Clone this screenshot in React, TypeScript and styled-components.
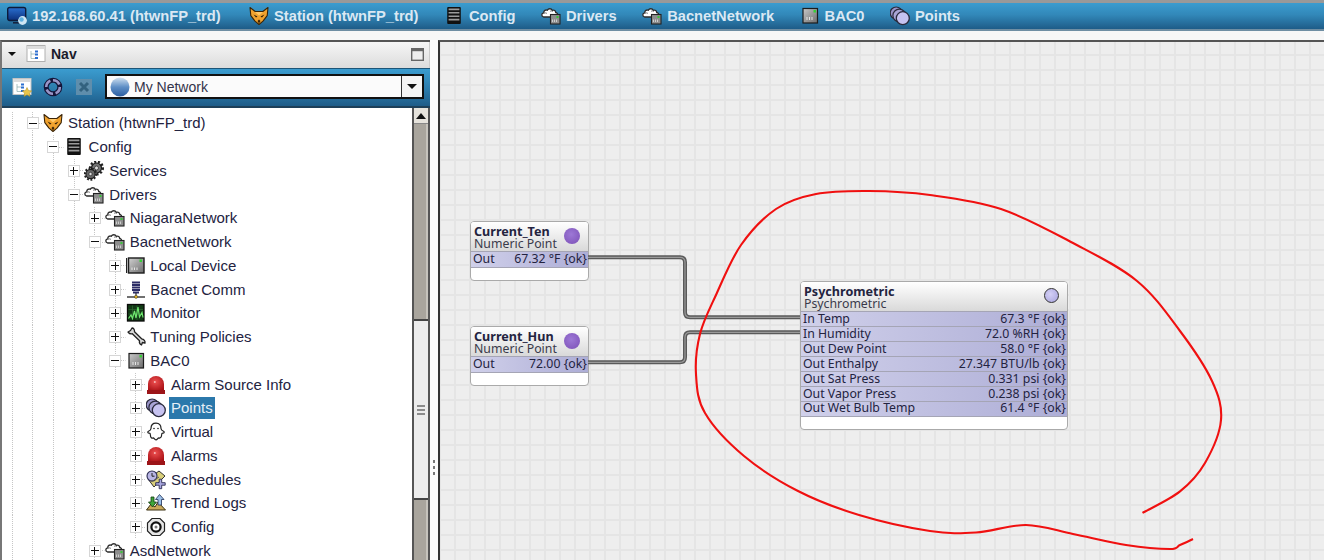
import React from "react";
import styled, { createGlobalStyle } from "styled-components";

const Global = createGlobalStyle`
  html, body { margin: 0; padding: 0; background: #f7f7f7; }
  * { box-sizing: border-box; }
`;

/* ---------- icons ---------- */
const Svg: React.FC<{ size?: number; children: React.ReactNode }> = ({ size = 20, children }) => (
  <svg width={size} height={size} viewBox="0 0 20 20" style={{ display: "block", flex: "none" }}>{children}</svg>
);
const MonitorIcon = () => (
  <Svg>
    <defs><linearGradient id="mon" x1="0" y1="0" x2="0" y2="1"><stop offset="0" stopColor="#2a6fd0"/><stop offset="1" stopColor="#0b2f7a"/></linearGradient></defs>
    <rect x="0.7" y="1.5" width="18" height="13" rx="2" fill="url(#mon)" stroke="#0d1b3a" strokeWidth="1.4"/>
    <path d="M6 16h8v1.6H6z" fill="#15233f"/>
    <circle cx="15.5" cy="14.5" r="4.4" fill="#cfe6f4"/>
    <circle cx="14.5" cy="13.5" r="2.2" fill="#5fb0e0"/>
  </Svg>
);
const FoxIcon = () => (
  <Svg>
    <path d="M1 1.5 6.2 5.5h7.6L19 1.5l-.8 8.2-4.2 5.5L10 18.5 6 15.2 1.8 9.7z" fill="#f0a22e" stroke="#3a2408" strokeWidth="1.1" strokeLinejoin="round"/>
    <path d="M4.5 8.5 8.5 10.5 7 11.5zM15.5 8.5 11.5 10.5 13 11.5z" fill="#2a1a06"/>
    <path d="M8.5 15 10 17.6 11.5 15 10 13.5z" fill="#3a2408"/>
    <path d="M6 6 10 9.5 14 6z" fill="#ffc766"/>
  </Svg>
);
const ServerIcon = () => (
  <Svg>
    <rect x="3.2" y="1" width="13.6" height="17" rx="1" fill="#111"/>
    <path d="M4.6 3.4h10.8M4.6 6.8h10.8M4.6 10.2h10.8M4.6 13.6h10.8" stroke="#9a9a9a" strokeWidth="1.6"/>
  </Svg>
);
const CloudIcon = () => (
  <Svg>
    <path d="M2.500 11C.2 10.300.2 7.200 2.800 6.800 2.500 4.600 4.800 3.400 6.300 4.300 7.300 2.200 10.300 2.200 11.200 4.300c1.800-.8 3.600.4 3.500 2.200 1.500.2 2.300 1.500 2 3L15 11z" fill="#fff" stroke="#2b2b2b" strokeWidth="1.300" strokeLinejoin="round"/>
    <path d="M3 7.500c1-1 2-.6 3 0M9 5.500c1-1 2.200-.6 3 .3" fill="none" stroke="#555" strokeWidth=".8"/>
    <rect x="9.500" y="8.500" width="9.500" height="9.500" fill="#8e8e8e" stroke="#222" strokeWidth="1.100"/>
    <rect x="15.500" y="10" width="2" height="2" fill="#39c539"/>
    <path d="M11.500 16v-2.500M13.500 16v-2.500M15.500 16v-2.500" stroke="#ddd" strokeWidth=".8"/>
  </Svg>
);
const DeviceIcon = () => (
  <Svg>
    <defs><linearGradient id="dev" x1="0" y1="0" x2="1" y2="1"><stop offset="0" stopColor="#c9c9c9"/><stop offset="1" stopColor="#6c6c6c"/></linearGradient></defs>
    <rect x="3" y="2.500" width="14.500" height="14.500" fill="url(#dev)" stroke="#1c1c1c" strokeWidth="1.200"/>
    <rect x="13.500" y="4" width="2.500" height="2.500" fill="#35d035"/>
    <path d="M7 14v-3M9.500 14v-3M12 14v-3" stroke="#eee" strokeWidth=".9"/>
  </Svg>
);
const WideDeviceIcon = () => (
  <Svg>
    <defs><linearGradient id="wdev" x1="0" y1="0" x2="1" y2="1"><stop offset="0" stopColor="#d2d2d2"/><stop offset="1" stopColor="#6c6c6c"/></linearGradient></defs>
    <path d="M.6 2v15" stroke="#222" strokeWidth="1.200"/>
    <rect x="2.500" y="2" width="15.500" height="15" fill="url(#wdev)" stroke="#1c1c1c" strokeWidth="1.400"/>
    <rect x="13.500" y="3.500" width="2.500" height="2.500" fill="#35d035"/>
    <path d="M6 14v-2.500M8.500 14v-2.500M11 14v-2.500" stroke="#eee" strokeWidth=".9"/>
  </Svg>
);
const PointsIcon = () => (
  <Svg>
    <circle cx="6.200" cy="7" r="6" fill="#9a94c8" stroke="#2a2a3c" strokeWidth="1.200"/>
    <circle cx="9.300" cy="9.500" r="6.400" fill="#a9a4d6" stroke="#2a2a3c" strokeWidth="1.200"/>
    <circle cx="12.800" cy="12.200" r="6.500" fill="#c6c2f0" stroke="#2a2a3c" strokeWidth="1.300"/>
  </Svg>
);
const GearsIcon = () => (
  <Svg>
    <circle cx="12.500" cy="7" r="5" fill="#777" stroke="#1b1b1b" strokeWidth="1.200"/>
    <circle cx="12.500" cy="7" r="6.300" fill="none" stroke="#222" strokeWidth="2.400" strokeDasharray="2 1.800"/>
    <circle cx="12.500" cy="7" r="2" fill="#ddd" stroke="#222" strokeWidth=".7"/>
    <circle cx="6.500" cy="13" r="4.600" fill="#666" stroke="#1b1b1b" strokeWidth="1.100"/>
    <circle cx="6.500" cy="13" r="5.600" fill="none" stroke="#222" strokeWidth="2.200" strokeDasharray="1.800 1.600"/>
    <circle cx="6.500" cy="13" r="1.700" fill="#ddd" stroke="#222" strokeWidth=".7"/>
  </Svg>
);
const CommIcon = () => (
  <Svg>
    <path d="M6 2.500h8M6 5h8M6 7.500h8M6 10h8M7 12.500h6" stroke="#2c2c66" strokeWidth="1.800"/>
    <path d="M10 13v3" stroke="#333" strokeWidth="1.200"/>
    <path d="M1 17h18" stroke="#222" strokeWidth="1.300"/>
    <circle cx="10" cy="16.800" r="1.600" fill="#e0b020" stroke="#333" strokeWidth=".5"/>
  </Svg>
);
const ChartIcon = () => (
  <Svg>
    <rect x="1.500" y="1.500" width="16.500" height="16.500" fill="#123a16" stroke="#0a0a0a" strokeWidth="1.300"/>
    <path d="M2.500 6.500h14.500M2.500 11h14.500M6.500 2.500v14.500M11 2.500v14.500" stroke="#2f6a33" strokeWidth=".7"/>
    <path d="M2.500 15.500 5 12l1.500 3.500L8.500 8 10 15l2-11 1.500 10L16 9.500l1 5" fill="none" stroke="#6fe86f" strokeWidth="1.200"/>
  </Svg>
);
const WrenchIcon = () => (
  <Svg>
    <path d="M2 5c1.400 1.800 3 2.200 4.300 1.700l7.200 7c-.4 1.700.2 3.500 2 4.300l.9-2.500 2.600.6c.4-2.100-1-4-3.400-4.300L8.500 4.700C8.700 2.600 7.600 1 6 1L4.500 3.500z" fill="#d9d9d9" stroke="#222" strokeWidth="1.300" strokeLinejoin="round"/>
  </Svg>
);
const AlarmIcon = () => (
  <Svg>
    <defs><radialGradient id="alm" cx=".45" cy=".4" r=".7"><stop offset="0" stopColor="#ee5050"/><stop offset="1" stopColor="#a80f14"/></radialGradient></defs>
    <path d="M2 15.500V9a8 8 0 0 1 16 0v6.500z" fill="url(#alm)"/>
    <path d="M1 15h18v4H1z" fill="#9c1418"/>
    <circle cx="8.800" cy="7" r="1" fill="#f6b8b8"/>
  </Svg>
);
const GhostIcon = () => (
  <Svg>
    <path d="M10 1.200c-3.500 0-5 2.300-5 5.300 0 1.200-.6 1.900-2.500 2.700-1.300.6-.7 2.100.7 2 1 0 1.200.5 1.200 1.800 0 2.700 1.600 3.800 2.800 2.900 1-.2 1.200 2 2.800 1.900 1.500 0 1.500-1.900 3-1.900 1.300.6 2.600-.8 2.600-2.900 0-1.300.3-1.800 1.200-1.800 1.400.1 2-1.400.7-2-1.900-.8-2.500-1.500-2.500-2.700 0-3-1.500-5.300-5-5.300z" fill="#fff" stroke="#222" strokeWidth="1.200"/>
    <circle cx="8" cy="6.500" r=".8" fill="#222"/><circle cx="12" cy="6.500" r=".8" fill="#222"/>
  </Svg>
);
const ScheduleIcon = () => (
  <Svg>
    <path d="M2 9 13 1l6 5-11 11z" fill="#d9cf7a" stroke="#333" strokeWidth="1"/>
    <circle cx="6" cy="6" r="5" fill="#b9b6e6" stroke="#2a2a50" strokeWidth="1.100"/>
    <path d="M6 3v3.200h2.500" fill="none" stroke="#222" strokeWidth="1"/>
    <path d="M5 11h2l6-4" stroke="#555" fill="none"/>
    <path d="M14 9.500h2.500V13H20v2.500h-3.500V19H14v-3.500h-3.500V13H14z" transform="translate(-.8 -.3)" fill="#a9a8e0" stroke="#2a2a50" strokeWidth=".9"/>
  </Svg>
);
const TrendIcon = () => (
  <Svg>
    <path d="M.5 17 5 11l4 3 3-5 7.500 8z" fill="#c9a95a" stroke="#3a3010" strokeWidth="1"/>
    <path d="M5 4h3v5h2.500L6.500 14 2.500 9H5z" fill="#3ea53a" stroke="#123d10" strokeWidth=".8"/>
    <path d="M13.500 1.500 18 6.500h-2.500V12h-3.500V6.500H9.500z" fill="#9cc0e8" stroke="#1d2f55" strokeWidth=".8"/>
  </Svg>
);
const HexIcon = () => (
  <Svg>
    <path d="M6 1.500h8L18.500 6v8L14 18.500H6L1.500 14V6z" fill="#e6e6e6" stroke="#222" strokeWidth="1.200"/>
    <circle cx="10" cy="10" r="4.600" fill="#fff" stroke="#111" strokeWidth="2.200"/>
    <circle cx="10" cy="10" r="1.500" fill="#777"/>
  </Svg>
);
const TreeDocIcon: React.FC<{ star?: boolean }> = ({ star }) => (
  <Svg>
    <rect x="1" y="1.500" width="18" height="16" fill="#fff" stroke={star ? "#c4c4c4" : "#b0b0b0"} strokeWidth="1"/>
    <rect x="1.500" y="2" width="17" height="3" fill="#dcdcdc"/>
    <path d="M5 7v7.500h4M5 10h4" fill="none" stroke="#8aa" strokeWidth=".7"/>
    <rect x="9" y="6.500" width="3" height="2" fill="#2a6fd0"/>
    <rect x="9" y="9.500" width="3" height="2" fill="#2a6fd0"/>
    <rect x="9" y="13" width="3" height="2" fill="#2a6fd0"/>
    {star && <path d="M15 10.500l1.500 3 3.300.4-2.400 2.200.6 3.300-3-1.600-3 1.600.6-3.300-2.400-2.200 3.300-.4z" fill="#e8c44a" stroke="#a88a20" strokeWidth=".5"/>}
  </Svg>
);
const RingIcon = () => (
  <Svg>
    <circle cx="10" cy="10" r="6.800" fill="none" stroke="#16163a" strokeWidth="5"/>
    <circle cx="10" cy="10" r="6.800" fill="none" stroke="#9a96c8" strokeWidth="2.600" strokeDasharray="8 2.600"/>
  </Svg>
);
const XIcon = () => (
  <Svg>
    <rect x="2" y="2" width="16" height="16" fill="#5f8eac"/>
    <path d="M6 6l8 8M14 6l-8 8" stroke="#33627f" strokeWidth="3"/>
  </Svg>
);
const GlobeIcon = () => (
  <Svg>
    <defs><linearGradient id="glb" x1="0" y1="0" x2="0" y2="1"><stop offset="0" stopColor="#cfe0f0"/><stop offset=".5" stopColor="#5f8fc6"/><stop offset="1" stopColor="#2a5da0"/></linearGradient></defs>
    <circle cx="10" cy="10" r="9.500" fill="url(#glb)"/>
  </Svg>
);
const MaxIcon = () => (
  <svg width="13" height="13" viewBox="0 0 13 13" style={{ display: "block" }}>
    <rect x=".7" y=".7" width="11.600" height="11.600" fill="#eee" stroke="#666" strokeWidth="1.400"/>
    <rect x="1" y="1" width="11" height="2.200" fill="#666"/>
  </svg>
);

/* ---------- top bar ---------- */
const Page = styled.div`
  width: 1324px; height: 560px; overflow: hidden; display: flex; flex-direction: column;
  background: #f7f7f7; font-family: "Liberation Sans", Arial, sans-serif;
`;
const Breadcrumb = styled.div`
  flex: none; height: 31px; display: flex; align-items: center; gap: 25.5px; padding: 0 0 0 7px;
  border-top: 3px solid #999;
  border-bottom: 2px solid #6f8ea3;
  background: linear-gradient(#3b9ccf, #3288b9 45%, #1e5c88);
`;
const Crumb = styled.div`
  display: flex; align-items: center; gap: 5px;
  color: #dbe8f3; font-size: 14.7px; font-weight: 700; white-space: nowrap;
  &:first-child { margin-right: 3px; }
`;
const Main = styled.div`
  flex: none; margin-top: 9px; height: 520px; display: flex;
`;

/* ---------- nav ---------- */
const NavPanel = styled.div`
  flex: none; width: 430px; display: flex; flex-direction: column;
  border-top: 2px solid #555; border-left: 2px solid #777;
`;
const NavHeader = styled.div`
  flex: none; height: 26px; display: flex; align-items: center; padding: 0 5px 2px 0;
  background: linear-gradient(#f6f6f6, #dcdcdc);
  border-right: 1px solid #ccc;
`;
const Caret = styled.span`
  width: 0; height: 0; margin: 0 10px 0 6px;
  border-left: 4px solid transparent; border-right: 4px solid transparent; border-top: 4px solid #111;
`;
const NavTitle = styled.span`
  margin-left: 5px; flex: 1; font-size: 14px; font-weight: 700; color: #1b1b2b;
`;
const NavTools = styled.div`
  flex: none; height: 40px; display: flex; align-items: center; gap: 11px; padding: 0 6px 2px 10px;
  background: linear-gradient(#3b9ccf, #2a78a8 60%, #1e5c88);
  border-top: 1px solid #1c5578;
  border-bottom: 2px solid #1d3f58;
`;
const Combo = styled.div`
  flex: 1; height: 25px; display: flex; align-items: center;
  background: #fbfbfb; border: 2px solid #111; padding-left: 3px; gap: 4px;
  font-size: 14px; color: #33334a;
`;
const ComboText = styled.span`flex: 1;`;
const ComboBtn = styled.span`
  flex: none; width: 21px; height: 100%; display: flex; align-items: center; justify-content: center;
  background: #f4f4f4; border-left: 1px solid #333;
`;
const ComboCaret = styled.span`
  width: 0; height: 0;
  border-left: 5px solid transparent; border-right: 5px solid transparent; border-top: 5px solid #111;
`;
const TreeWrap = styled.div`
  flex: 1; min-height: 0; display: flex; background: #fff;
`;
const Tree = styled.div`
  flex: 1; min-width: 0; padding-top: 3.5px; overflow: hidden;
`;
const Row = styled.div`
  height: 23.75px; display: flex; align-items: center;
`;
const dots = "repeating-linear-gradient(to bottom, #c6c6c6 0 1px, transparent 1px 2px)";
const dotsH = "repeating-linear-gradient(to right, #c6c6c6 0 1px, transparent 1px 2px)";
const Guide = styled.span<{ $last?: boolean }>`
  flex: none; width: 20.6px; height: 100%; display: flex; align-items: center; justify-content: center;
  background: ${(p) => (p.$last ? `${dotsH} right center / 50% 1px no-repeat, ` : "")}${dots} center / 1px 100% no-repeat;
`;
const Toggle = styled.span<{ $open?: boolean }>`
  width: 12px; height: 12px; border: 1px solid #d6d6d6;
  background:
    linear-gradient(#111, #111) center / 8px 1.4px no-repeat,
    ${(p) => (p.$open ? "" : "linear-gradient(#111, #111) center / 1.4px 8px no-repeat,")}
    #fff;
`;
const Label = styled.span<{ $sel?: boolean }>`
  margin-left: 2.800px; padding: 0 2px; height: 22px; line-height: 22px; white-space: nowrap;
  font-size: 15px;
  color: ${(p) => (p.$sel ? "#e6eff7" : "#23233f")};
  background: ${(p) => (p.$sel ? "#2b78ab" : "transparent")};
`;
const Scrollbar = styled.div`
  flex: none; width: 18px; display: flex; flex-direction: column;
  border-left: 2px solid #555; border-right: 2px solid #555;
  background: linear-gradient(to right, #a9a59d 85%, #c6c3bc 85%);
`;
const ScrollUp = styled.div`
  flex: none; height: 16px; display: flex; align-items: center; justify-content: center;
  background: #e6e3dc; border-bottom: 1px solid #888;
`;
const UpArrow = styled.span`
  width: 0; height: 0;
  border-left: 5px solid transparent; border-right: 5px solid transparent; border-bottom: 6px solid #111;
`;
const Thumb = styled.div`
  flex: none; margin-top: 195px; height: 181px; display: flex; flex-direction: column;
  align-items: center; justify-content: center; gap: 2px;
  background: #ececec; border-top: 2px solid #444; border-bottom: 2px solid #444;
`;
const Grip = styled.span`
  width: 8px; height: 2px; background: #8b8b8b;
`;
const Splitter = styled.div`
  flex: none; width: 8px; display: flex; flex-direction: column; align-items: center; gap: 3px;
  padding-top: 420px; background: #fbfbfb;
`;
const SplitDot = styled.span`
  width: 2px; height: 3px; background: #777;
`;

/* ---------- canvas ---------- */
const Canvas = styled.div`
  position: relative; flex: 1; min-width: 0;
  border-left: 2px solid #333; border-top: 2px solid #555;
  background-color: #eeeeee;
  background-image:
    linear-gradient(to right, #e5e5e5 0 2px, transparent 2px),
    linear-gradient(to bottom, #e5e5e5 0 2px, transparent 2px);
  background-size: 15px 15px;
  background-position: 14px 12px;
`;
const Overlay = styled.svg`
  position: absolute; left: 0; top: 0; width: 884px; height: 518px; pointer-events: none;
`;
const Node = styled.div<{ $x: number; $y: number; $w: number; $h: number }>`
  position: absolute; left: ${(p) => p.$x - 440}px; top: ${(p) => p.$y - 42}px;
  width: ${(p) => p.$w}px; height: ${(p) => p.$h}px;
  display: flex; flex-direction: column;
  background: #fff; border: 1.500px solid #aaa; border-radius: 4px; overflow: hidden;
  font-family: "Noto Sans", Tahoma, sans-serif; font-size: 12.3px; color: #23233f;
`;
const NodeHead = styled.div<{ $h: number; $pad: number }>`
  flex: none; height: ${(p) => p.$h}px; display: flex; align-items: center;
  padding: 3px ${(p) => p.$pad}px 0 3px;
  background: linear-gradient(#ffffff, #d9d9d9);
`;
const NodeTitles = styled.div`
  flex: 1; min-width: 0; line-height: 12px;
`;
const NodeName = styled.div`
  font-weight: 700; white-space: nowrap; font-size: 12.6px;
`;
const NodeType = styled.div`
  color: #3a3a4a; white-space: nowrap;
`;
const Dot = styled.span<{ $light?: boolean }>`
  flex: none; margin-bottom: 5px;
  width: ${(p) => (p.$light ? 15 : 16)}px; height: ${(p) => (p.$light ? 15 : 16)}px; border-radius: 50%;
  background: ${(p) =>
    p.$light
      ? "radial-gradient(circle at 40% 40%, #d4d0f6, #a6a2dc)"
      : "radial-gradient(circle at 45% 40%, #9d78d6, #7b4fb6)"};
  border: ${(p) => (p.$light ? "1.500px solid #333" : "none")};
`;
const Slot = styled.div`
  flex: none; height: 15px; display: flex; align-items: center; justify-content: space-between;
  padding: 0 1px 1px 2px; line-height: 13px; white-space: nowrap;
  background: linear-gradient(to right, #d0d0ea, #adadd6);
  border-top: 1.500px solid #a5a5b5;
  &:last-child { height: 16.500px; padding-bottom: 2.500px; border-bottom: 1.500px solid #a5a5b5; }
`;

/* ---------- data ---------- */
type Item = { d: number; icon: React.ReactNode; label: string; open?: boolean; sel?: boolean };
const items: Item[] = [
  { d: 0, icon: <FoxIcon />, label: "Station (htwnFP_trd)", open: true },
  { d: 1, icon: <ServerIcon />, label: "Config", open: true },
  { d: 2, icon: <GearsIcon />, label: "Services" },
  { d: 2, icon: <CloudIcon />, label: "Drivers", open: true },
  { d: 3, icon: <CloudIcon />, label: "NiagaraNetwork" },
  { d: 3, icon: <CloudIcon />, label: "BacnetNetwork", open: true },
  { d: 4, icon: <WideDeviceIcon />, label: "Local Device" },
  { d: 4, icon: <CommIcon />, label: "Bacnet Comm" },
  { d: 4, icon: <ChartIcon />, label: "Monitor" },
  { d: 4, icon: <WrenchIcon />, label: "Tuning Policies" },
  { d: 4, icon: <DeviceIcon />, label: "BAC0", open: true },
  { d: 5, icon: <AlarmIcon />, label: "Alarm Source Info" },
  { d: 5, icon: <PointsIcon />, label: "Points", sel: true },
  { d: 5, icon: <GhostIcon />, label: "Virtual" },
  { d: 5, icon: <AlarmIcon />, label: "Alarms" },
  { d: 5, icon: <ScheduleIcon />, label: "Schedules" },
  { d: 5, icon: <TrendIcon />, label: "Trend Logs" },
  { d: 5, icon: <HexIcon />, label: "Config" },
  { d: 3, icon: <CloudIcon />, label: "AsdNetwork" },
];
const crumbs: [React.ReactNode, string][] = [
  [<MonitorIcon />, "192.168.60.41 (htwnFP_trd)"],
  [<FoxIcon />, "Station (htwnFP_trd)"],
  [<ServerIcon />, "Config"],
  [<CloudIcon />, "Drivers"],
  [<CloudIcon />, "BacnetNetwork"],
  [<DeviceIcon />, "BAC0"],
  [<PointsIcon />, "Points"],
];
const slots: [string, string][] = [
  ["In Temp", "67.3 °F {ok}"],
  ["In Humidity", "72.0 %RH {ok}"],
  ["Out Dew Point", "58.0 °F {ok}"],
  ["Out Enthalpy", "27.347 BTU/lb {ok}"],
  ["Out Sat Press", "0.331 psi {ok}"],
  ["Out Vapor Press", "0.238 psi {ok}"],
  ["Out Wet Bulb Temp", "61.4 °F {ok}"],
];
const red: [number, number][] = [
  [1142.5, 512.9], [1180, 491.4], [1205, 463], [1221, 420], [1212, 381], [1180, 331], [1137, 281], [1073, 243],
  [1001, 209], [930, 195], [869, 191], [816, 194], [776, 209], [741, 245], [716, 295], [700, 334], [696, 374],
  [705, 413], [744, 456], [798, 491], [859, 515], [930, 531], [976, 532.5], [1026, 525], [1073, 534], [1126, 545],
  [1170, 549], [1180, 545], [1193, 539],
];
function smooth(p: [number, number][]) {
  let d = `M${p[0][0]} ${p[0][1]}`;
  for (let i = 0; i < p.length - 1; i++) {
    const a = p[Math.max(i - 1, 0)], b = p[i], c = p[i + 1], e = p[Math.min(i + 2, p.length - 1)];
    d += `C${b[0] + (c[0] - a[0]) / 6} ${b[1] + (c[1] - a[1]) / 6} ${c[0] - (e[0] - b[0]) / 6} ${c[1] - (e[1] - b[1]) / 6} ${c[0]} ${c[1]}`;
  }
  return d;
}
const wires = [
  "M588 257.300H680Q685 257.300 685 262.300V312.300Q685 317.300 690 317.300H800",
  "M588 362.300H680Q685 362.300 685 357.300V337.300Q685 332.300 690 332.300H800",
];

export default function App() {
  return (
    <Page>
      <Global />
      <Breadcrumb>
        {crumbs.map(([icon, text]) => (
          <Crumb key={text}>{icon}{text}</Crumb>
        ))}
      </Breadcrumb>
      <Main>
        <NavPanel>
          <NavHeader>
            <Caret />
            <TreeDocIcon />
            <NavTitle>Nav</NavTitle>
            <MaxIcon />
          </NavHeader>
          <NavTools>
            <TreeDocIcon star />
            <RingIcon />
            <XIcon />
            <Combo>
              <GlobeIcon />
              <ComboText>My Network</ComboText>
              <ComboBtn><ComboCaret /></ComboBtn>
            </Combo>
          </NavTools>
          <TreeWrap>
            <Tree>
              {items.map((it, i) => (
                <Row key={i}>
                  {Array.from({ length: it.d + 1 }, (_, k) => <Guide key={k} />)}
                  <Guide $last><Toggle $open={it.open} /></Guide>
                  {it.icon}
                  <Label $sel={it.sel}>{it.label}</Label>
                </Row>
              ))}
            </Tree>
            <Scrollbar>
              <ScrollUp><UpArrow /></ScrollUp>
              <Thumb><Grip /><Grip /><Grip /></Thumb>
            </Scrollbar>
          </TreeWrap>
        </NavPanel>
        <Splitter><SplitDot /><SplitDot /><SplitDot /></Splitter>
        <Canvas>
          <Node $x={470} $y={221} $w={119} $h={60}>
            <NodeHead $h={29} $pad={8}>
              <NodeTitles><NodeName>Current_Ten</NodeName><NodeType>Numeric Point</NodeType></NodeTitles>
              <Dot />
            </NodeHead>
            <Slot><span>Out</span><span>67.32 °F {"{ok}"}</span></Slot>
          </Node>
          <Node $x={470} $y={326} $w={119} $h={60}>
            <NodeHead $h={29} $pad={8}>
              <NodeTitles><NodeName>Current_Hun</NodeName><NodeType>Numeric Point</NodeType></NodeTitles>
              <Dot />
            </NodeHead>
            <Slot><span>Out</span><span>72.00 {"{ok}"}</span></Slot>
          </Node>
          <Node $x={800} $y={281} $w={268} $h={149}>
            <NodeHead $h={28.5} $pad={8}>
              <NodeTitles><NodeName>Psychrometric</NodeName><NodeType>Psychrometric</NodeType></NodeTitles>
              <Dot $light />
            </NodeHead>
            {slots.map(([a, b]) => (
              <Slot key={a}><span>{a}</span><span>{b}</span></Slot>
            ))}
          </Node>
          <Overlay viewBox="440 42 884 518">
            {wires.map((d) => (
              <g key={d} fill="none">
                <path d={d} stroke="#5a5a5a" strokeWidth="4" />
                <path d={d} stroke="#9a9a9a" strokeWidth="1.200" />
              </g>
            ))}
            <path d={smooth(red)} fill="none" stroke="#f01010" strokeWidth="2.100" />
          </Overlay>
        </Canvas>
      </Main>
    </Page>
  );
}
